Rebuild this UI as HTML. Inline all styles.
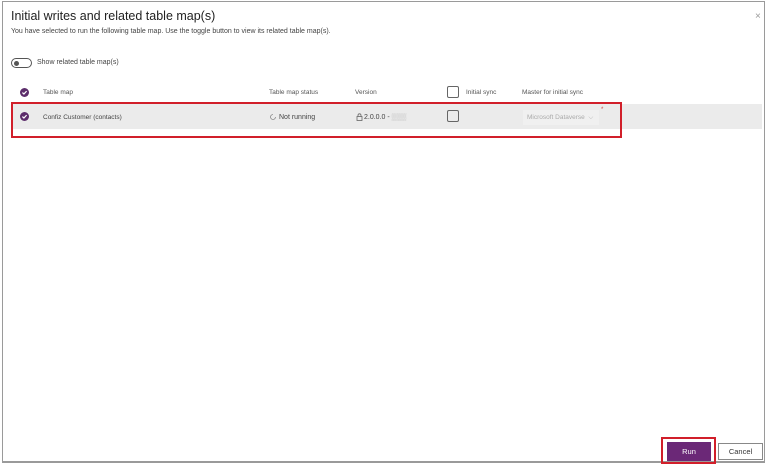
<!DOCTYPE html>
<html><head><style>
body{margin:0;width:768px;height:464px;background:#fff;font-family:"Liberation Sans",sans-serif;position:relative;overflow:hidden;color:#323130}
.a{position:absolute;white-space:nowrap}
.frame{position:absolute;left:2px;top:1px;width:761px;height:459px;border:1.5px solid #9a9a9a;border-bottom-width:2.5px}
.box{position:absolute;width:10px;height:10px;border:1px solid #666;border-radius:2px;background:#fff}
.s{font-size:6.5px;color:#555}
</style></head><body>
<div class="frame"></div>
<div class="a" style="left:11px;top:9px;font-size:12.5px;color:#222">Initial writes and related table map(s)</div>
<div class="a" style="left:11px;top:28px;font-size:7px;color:#444">You have selected to run the following table map. Use the toggle button to view its related table map(s).</div>
<div class="a" style="left:755px;top:11px;font-size:10px;color:#999">×</div>
<div class="a" style="left:11px;top:58px;width:19px;height:8px;border:1px solid #555;border-radius:6px"></div>
<div class="a" style="left:14px;top:60.5px;width:5px;height:5px;border-radius:50%;background:#555"></div>
<div class="a" style="left:37px;top:59px;font-size:7px;color:#444">Show related table map(s)</div>
<svg class="a" style="left:20px;top:88px" width="9" height="9" viewBox="0 0 9 9"><circle cx="4.5" cy="4.5" r="4.5" fill="#5c2d6b"/><path d="M2.4 4.6 L3.9 6 L6.6 3.1" stroke="#fff" stroke-width="1.2" fill="none"/></svg>
<div class="a s" style="left:43px;top:89px">Table map</div>
<div class="a s" style="left:269px;top:89px">Table map status</div>
<div class="a s" style="left:355px;top:89px">Version</div>
<div class="box" style="left:447px;top:86px"></div>
<div class="a s" style="left:466px;top:89px">Initial sync</div>
<div class="a s" style="left:522px;top:89px">Master for initial sync</div>
<div class="a" style="left:12px;top:104px;width:750px;height:25px;background:#ebebeb"></div>
<svg class="a" style="left:20px;top:112px" width="9" height="9" viewBox="0 0 9 9"><circle cx="4.5" cy="4.5" r="4.5" fill="#5c2d6b"/><path d="M2.4 4.6 L3.9 6 L6.6 3.1" stroke="#fff" stroke-width="1.2" fill="none"/></svg>
<div class="a s" style="left:43px;top:114px;color:#444">Confiz Customer (contacts)</div>
<svg class="a" style="left:269px;top:113px" width="8" height="8" viewBox="0 0 8 8"><path d="M6.5 4 A2.5 2.5 0 1 1 4 1.5" stroke="#888" stroke-width="0.8" fill="none"/></svg>
<div class="a" style="left:279px;top:114px;font-size:7px;color:#444">Not running</div>
<svg class="a" style="left:356px;top:113px" width="7" height="8" viewBox="0 0 7 8"><path d="M2 3.5V2.3a1.5 1.5 0 0 1 3 0v1.2" stroke="#666" stroke-width="0.8" fill="none"/><rect x="1" y="3.5" width="5" height="4" stroke="#666" stroke-width="0.8" fill="none"/></svg>
<div class="a" style="left:364px;top:114px;font-size:7px;color:#444">2.0.0.0 - <span style="color:#bbb">▒▒▒</span></div>
<div class="box" style="left:447px;top:110px;background:#ebebeb"></div>
<div class="a" style="left:523px;top:110px;width:76px;height:15px;background:#f0f0f0"></div>
<div class="a" style="left:527px;top:114px;font-size:6.5px;color:#aaa">Microsoft Dataverse &nbsp;⌵</div>
<div class="a" style="left:601px;top:107px;font-size:6px;color:#c44">*</div>
<div class="a" style="left:11px;top:102px;width:607px;height:32px;border:2px solid #d11f2a"></div>
<div class="a" style="left:661px;top:437px;width:55px;height:27px;border:2px solid #d11f2a;box-sizing:border-box"></div>
<div class="a" style="left:667px;top:442px;width:44px;height:19px;background:#6b2877;color:#fff;font-size:7.5px;text-align:center;line-height:19px">Run</div>
<div class="a" style="left:718px;top:443px;width:45px;height:17px;border:1px solid #888;box-sizing:border-box;font-size:7.5px;text-align:center;line-height:15px;color:#333">Cancel</div>
</body></html>
